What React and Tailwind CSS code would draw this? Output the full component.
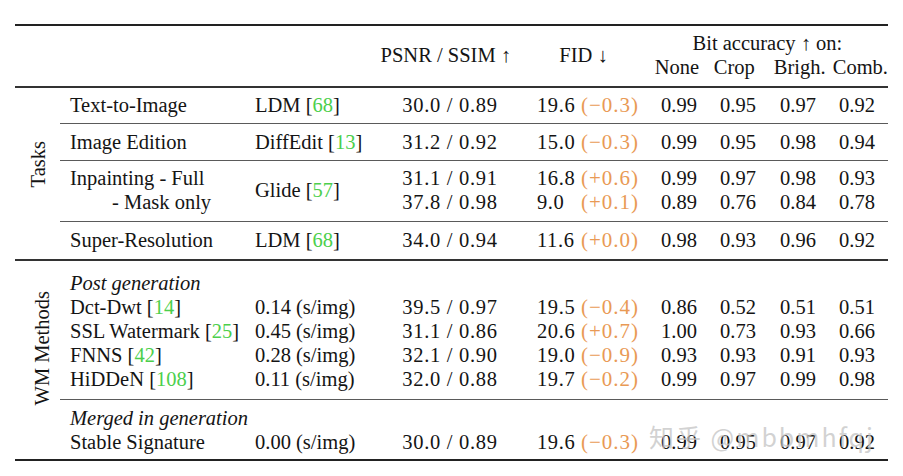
import React from 'react';

const Ref = ({ n }) => (
  <>
    [<span className="text-[#4ccf4c]">{n}</span>]
  </>
);

const Delta = ({ v }) => <span className="text-[#e99a55] text-[21px] tracking-[1px]">({v})</span>;

const Cells = ({ psnr, fid, delta, bits }) => (
  <>
    <div className="w-[134px] text-center tracking-[0.7px]">{psnr}</div>
    <div className="w-[144px] pl-[20px] flex items-baseline">
      <span className="w-[44px] tracking-[0.6px]">{fid}</span>
      <Delta v={delta} />
    </div>
    <div className="w-[59px]">{bits[0]}</div>
    <div className="w-[60px]">{bits[1]}</div>
    <div className="w-[59px]">{bits[2]}</div>
    <div className="flex-1">{bits[3]}</div>
  </>
);

const Line = () => <div className="h-[1px] bg-[#5a5a5a]" />;

const wmRows = [
  { name: 'Dct-Dwt ', ref: '14', time: '0.14 (s/img)', psnr: '39.5 / 0.97', fid: '19.5', delta: '−0.4', bits: ['0.86', '0.52', '0.51', '0.51'] },
  { name: 'SSL Watermark ', ref: '25', time: '0.45 (s/img)', psnr: '31.1 / 0.86', fid: '20.6', delta: '+0.7', bits: ['1.00', '0.73', '0.93', '0.66'] },
  { name: 'FNNS ', ref: '42', time: '0.28 (s/img)', psnr: '32.1 / 0.90', fid: '19.0', delta: '−0.9', bits: ['0.93', '0.93', '0.91', '0.93'] },
  { name: 'HiDDeN ', ref: '108', time: '0.11 (s/img)', psnr: '32.0 / 0.88', fid: '19.7', delta: '−0.2', bits: ['0.99', '0.97', '0.99', '0.98'] },
];

export default function App() {
  return (
    <div className="relative w-[903px] h-[476px] bg-white font-['Liberation_Serif',serif] text-[20.5px] leading-[24px] text-[#141414] overflow-hidden">
      <div className="pt-[24px] pl-[15px]">
        <div className="w-[873px]">
          <div className="h-[2px] bg-[#222]" />

          {/* header */}
          <div className="h-[60px] flex items-center pb-[3px]">
            <div className="w-[368px]" />
            <div className="w-[134px] text-center">PSNR / SSIM ↑</div>
            <div className="w-[144px] text-center">FID ↓</div>
            <div className="flex-1 flex flex-col">
              <div className="text-center pr-[8px]">Bit accuracy ↑ on:</div>
              <div className="flex whitespace-nowrap">
                <div className="w-[59px]">None</div>
                <div className="w-[60px]">Crop</div>
                <div className="w-[59px]">Brigh.</div>
                <div className="flex-1">Comb.</div>
              </div>
            </div>
          </div>

          <div className="h-[2px] bg-[#333]" />

          {/* tasks */}
          <div className="flex">
            <div className="w-[45px] flex items-center justify-center pb-[18px]">
              <span className="[writing-mode:vertical-rl] rotate-180">Tasks</span>
            </div>
            <div className="flex-1">
              <div className="h-[35px] flex items-center pb-[2px]">
                <div className="w-[195px] pl-[10px]">Text-to-Image</div>
                <div className="w-[128px]">LDM <Ref n="68" /></div>
                <Cells psnr="30.0 / 0.89" fid="19.6" delta="−0.3" bits={['0.99', '0.95', '0.97', '0.92']} />
              </div>
              <Line />
              <div className="h-[36px] flex items-center pb-[1px]">
                <div className="w-[195px] pl-[10px]">Image Edition</div>
                <div className="w-[128px]">DiffEdit <Ref n="13" /></div>
                <Cells psnr="31.2 / 0.92" fid="15.0" delta="−0.3" bits={['0.99', '0.95', '0.98', '0.94']} />
              </div>
              <Line />
              <div className="h-[60px] flex items-center pb-[2px]">
                <div className="w-[195px] pl-[10px]">
                  <div>Inpainting - Full</div>
                  <div className="pl-[42px]">- Mask only</div>
                </div>
                <div className="w-[128px]">Glide <Ref n="57" /></div>
                <div className="flex-1 flex flex-col">
                  <div className="flex">
                    <Cells psnr="31.1 / 0.91" fid="16.8" delta="+0.6" bits={['0.99', '0.97', '0.98', '0.93']} />
                  </div>
                  <div className="flex">
                    <Cells psnr="37.8 / 0.98" fid="9.0" delta="+0.1" bits={['0.89', '0.76', '0.84', '0.78']} />
                  </div>
                </div>
              </div>
              <Line />
              <div className="h-[37px] flex items-center pb-[2px]">
                <div className="w-[195px] pl-[10px]">Super-Resolution</div>
                <div className="w-[128px]">LDM <Ref n="68" /></div>
                <Cells psnr="34.0 / 0.94" fid="11.6" delta="+0.0" bits={['0.98', '0.93', '0.96', '0.92']} />
              </div>
            </div>
          </div>

          <div className="h-[2px] bg-[#333]" />

          {/* WM methods */}
          <div className="flex">
            <div className="w-[45px] flex items-center justify-center pb-[24px] pl-[8px]">
              <span className="[writing-mode:vertical-rl] rotate-180 whitespace-nowrap">WM Methods</span>
            </div>
            <div className="flex-1">
              <div className="pt-[10px] pb-[8px]">
                <div className="pl-[10px] italic">Post generation</div>
                {wmRows.map((r) => (
                  <div key={r.name} className="flex h-[24px]">
                    <div className="w-[195px] pl-[10px] whitespace-nowrap">
                      {r.name}
                      <Ref n={r.ref} />
                    </div>
                    <div className="w-[128px] whitespace-nowrap">{r.time}</div>
                    <Cells psnr={r.psnr} fid={r.fid} delta={r.delta} bits={r.bits} />
                  </div>
                ))}
              </div>
              <Line />
              <div className="pt-[6px] pb-[5px]">
                <div className="pl-[10px] italic">Merged in generation</div>
                <div className="flex h-[24px]">
                  <div className="w-[195px] pl-[10px]">Stable Signature</div>
                  <div className="w-[128px] whitespace-nowrap">0.00 (s/img)</div>
                  <Cells psnr="30.0 / 0.89" fid="19.6" delta="−0.3" bits={['0.99', '0.95', '0.97', '0.92']} />
                </div>
              </div>
            </div>
          </div>

          <div className="h-[2px] bg-[#222]" />
        </div>
      </div>

      {/* watermark */}
      <div className="absolute left-[649px] top-[423px] text-[25px] leading-[26px] text-[#c4c4c4]/75 font-['Noto_Sans_CJK_SC',sans-serif] whitespace-nowrap tracking-[2px]">
        知乎 @mbbmhfqj
      </div>
    </div>
  );
}
